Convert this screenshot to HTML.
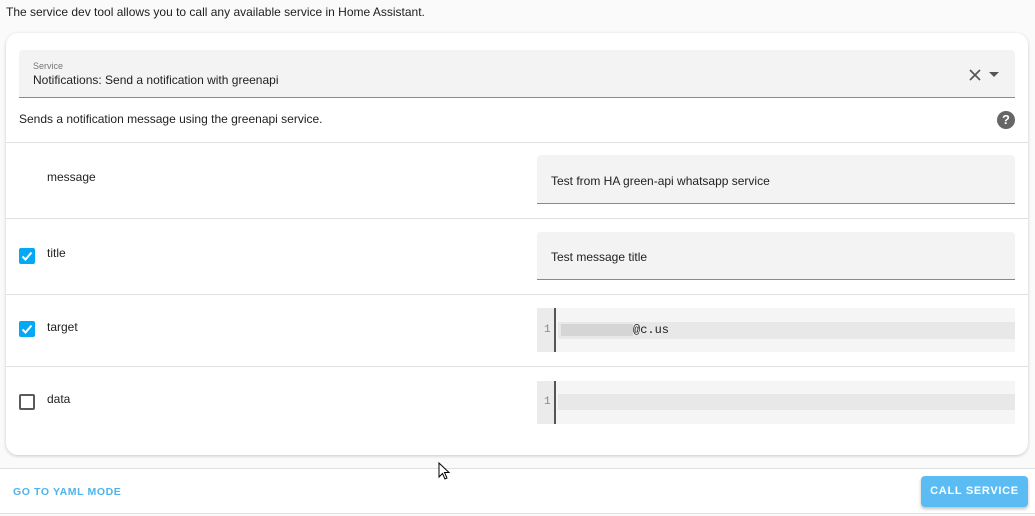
<!DOCTYPE html>
<html><head><style>
*{box-sizing:border-box;margin:0;padding:0}
body{width:1035px;height:516px;background:#fafafa;font-family:"Liberation Sans",sans-serif;color:#212121;position:relative;overflow:hidden;font-size:12px}
.abs{position:absolute}
.card{left:6px;top:33px;width:1022px;height:422px;background:#fff;border-radius:12px;box-shadow:0 1px 3px rgba(0,0,0,.2)}
.sep{position:absolute;left:6px;width:1022px;height:1px;background:#e0e0e0}
.inp{position:absolute;background:#f3f3f3;border-bottom:1px solid #8a8a8a;border-radius:4px 4px 0 0}
.cb{position:absolute;left:19px;width:16px;height:16px;border-radius:2px}
.on{background:#03a9f4}
.off{border:2px solid #5a5a5a}
.ed{position:absolute;left:537px;width:478px;background:#f5f5f5}
.gut{position:absolute;left:0;top:0;bottom:0;width:19px;background:#ebebeb;border-right:2px solid #555;font-family:"Liberation Mono",monospace;font-size:11px;color:#888}
.hl{position:absolute;left:21px;right:0;background:#e8e8e8}
</style></head><body>
<div class="abs" style="left:6px;top:5px">The service dev tool allows you to call any available service in Home Assistant.</div>
<div class="abs card"></div>
<div class="inp" style="left:19px;top:50px;width:996px;height:48px"></div>
<div class="abs" style="left:33px;top:61px;font-size:9px;color:#777">Service</div>
<div class="abs" style="left:33px;top:73px">Notifications: Send a notification with greenapi</div>
<svg class="abs" style="left:968px;top:68px" width="14" height="14" viewBox="0 0 14 14"><path d="M2 2L12 12M12 2L2 12" stroke="#555" stroke-width="1.6"/></svg>
<svg class="abs" style="left:989px;top:72px" width="10" height="6"><path d="M0 0H10L5 5Z" fill="#555"/></svg>
<div class="abs" style="left:19px;top:112px">Sends a notification message using the greenapi service.</div>
<div class="abs" style="left:997px;top:111px;width:18px;height:18px;border-radius:50%;background:#666;color:#fff;font-weight:bold;font-size:13px;text-align:center;line-height:18px">?</div>
<div class="sep" style="top:142px"></div>
<div class="sep" style="top:218px"></div>
<div class="sep" style="top:294px"></div>
<div class="sep" style="top:366px"></div>
<div class="abs" style="left:47px;top:170px">message</div>
<div class="abs" style="left:47px;top:246px">title</div>
<div class="abs" style="left:47px;top:320px">target</div>
<div class="abs" style="left:47px;top:392px">data</div>
<div class="cb on" style="top:248px"><svg width="16" height="16"><path d="M3.5 8.5L6.5 11.5L12.5 4.5" stroke="#fff" stroke-width="2" fill="none"/></svg></div>
<div class="cb on" style="top:321px"><svg width="16" height="16"><path d="M3.5 8.5L6.5 11.5L12.5 4.5" stroke="#fff" stroke-width="2" fill="none"/></svg></div>
<div class="cb off" style="top:394px"></div>
<div class="inp" style="left:537px;top:155px;width:478px;height:49px"></div>
<div class="abs" style="left:551px;top:174px">Test from HA green-api whatsapp service</div>
<div class="inp" style="left:537px;top:232px;width:478px;height:48px"></div>
<div class="abs" style="left:551px;top:250px">Test message title</div>
<div class="ed" style="top:308px;height:44px"><div class="hl" style="top:14px;height:17px"></div><div class="gut"><span style="position:absolute;left:7px;top:16px">1</span></div>
<div class="abs" style="left:24px;top:16px;width:72px;height:12px;background:#d0d0d0;opacity:.8"></div>
<div class="abs" style="left:96px;top:15px;font-family:'Liberation Mono',monospace;font-size:12px">@c.us</div></div>
<div class="ed" style="top:381px;height:43px"><div class="hl" style="top:13px;height:16px"></div><div class="gut"><span style="position:absolute;left:7px;top:15px">1</span></div></div>
<div class="abs" style="left:0;top:468px;width:1035px;height:46px;background:#fff;border-top:1px solid #e0e0e0;border-bottom:1px solid #e0e0e0"></div>
<div class="abs" style="left:13px;top:486px;font-size:10.5px;font-weight:bold;letter-spacing:0.6px;color:#4fb3ea">GO TO YAML MODE</div>
<div class="abs" style="left:921px;top:476px;width:107px;height:31px;background:#5bbcf4;border-radius:4px;box-shadow:0 2px 3px rgba(0,0,0,.25);color:#fff;font-size:11px;font-weight:bold;letter-spacing:0.7px;text-align:center;line-height:31px">CALL SERVICE</div>
<svg class="abs" style="left:438px;top:462px" width="12" height="18"><path d="M1 1V15L4.5 11.5L7 17L9 16L6.5 10.5H11Z" fill="#fff" stroke="#000" stroke-width="1"/></svg>
</body></html>
